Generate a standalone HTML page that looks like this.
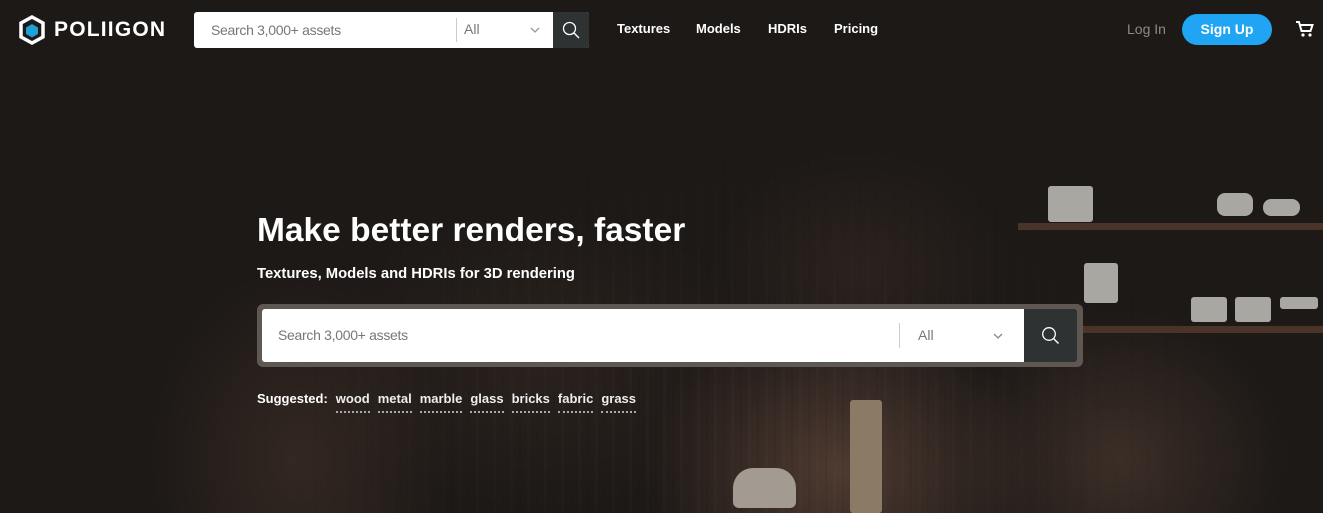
<!DOCTYPE html>
<html><head><meta charset="utf-8"><style>
*{margin:0;padding:0;box-sizing:border-box}
body{width:1323px;height:513px;overflow:hidden;background:#1d1917;font-family:"Liberation Sans",sans-serif;position:relative}
.wood{position:absolute;left:0;top:0;width:1323px;height:513px;
background:radial-gradient(ellipse 260px 220px at 840px 470px,rgba(95,70,58,.75),transparent 75%),
radial-gradient(ellipse 220px 200px at 1120px 460px,rgba(80,60,50,.6),transparent 75%),
radial-gradient(ellipse 200px 260px at 300px 460px,rgba(70,52,42,.55),transparent 75%),
radial-gradient(ellipse 300px 200px at 540px 360px,rgba(55,42,35,.5),transparent 75%),
radial-gradient(ellipse 200px 160px at 860px 270px,rgba(60,45,38,.45),transparent 75%);}
.stripes{position:absolute;left:0;top:0;width:1323px;height:513px;opacity:.15;
background:repeating-linear-gradient(90deg,rgba(120,90,75,.5) 0 3px,transparent 3px 9px,rgba(20,15,12,.6) 9px 11px,transparent 11px 17px);
-webkit-mask:radial-gradient(ellipse 500px 300px at 740px 430px,#000,transparent);}
.shelf{position:absolute;height:7px;background:#4a3329}
.pot{position:absolute;background:#a9a7a2;border-radius:3px}
.nav{position:absolute;top:0;left:0;right:0;height:58px}
.logo{position:absolute;left:18px;top:15px;display:flex;align-items:center;color:#fff;font-weight:bold;font-size:21px;letter-spacing:1.2px}
.sbox{position:absolute;left:194px;top:12px;width:395px;height:36px;background:#fff;border-radius:3px;overflow:hidden}
.sbox .ph{position:absolute;left:17px;top:10px;font-size:14px;color:#777;letter-spacing:-.3px}
.sbox .sep{position:absolute;left:262px;top:6px;width:1px;height:24px;background:#ccc}
.sbox .all{position:absolute;left:270px;top:9px;font-size:14px;color:#777}
.sbox .btn{position:absolute;right:0;top:0;width:36px;height:36px;background:#2e3232}
.links a{position:absolute;top:21px;color:#fff;font-size:13px;font-weight:bold;text-decoration:none}
h1{position:absolute;left:257px;top:212px;color:#fff;font-size:33.5px;font-weight:bold}
.sub{position:absolute;left:257px;top:266px;color:#fff;font-size:14.8px;font-weight:bold}
.big{position:absolute;left:257px;top:304px;width:826px;height:63px;background:#5e5752;border-radius:6px}
.big .in{position:absolute;left:5px;top:5px;width:762px;height:53px;background:#fff;border-radius:3px 0 0 3px}
.big .btn{position:absolute;left:767px;top:5px;width:53px;height:53px;background:#2e3232;border-radius:0 3px 3px 0}
.sug{position:absolute;left:257px;top:391px;color:#fff;font-size:13px;font-weight:bold;white-space:nowrap}
.sug span{display:inline-block;margin-right:8px}
.sug .t{color:#eee;border-bottom:2px dotted #aaa;padding-bottom:5px}
</style></head><body>
<div class="wood"></div><div class="stripes"></div>
<div class="shelf" style="left:1018px;top:223px;width:305px"></div>
<div class="shelf" style="left:1080px;top:326px;width:243px"></div>
<div class="pot" style="left:1048px;top:186px;width:45px;height:36px"></div>
<div class="pot" style="left:1217px;top:193px;width:36px;height:23px;border-radius:8px"></div>
<div class="pot" style="left:1263px;top:199px;width:37px;height:17px;border-radius:8px"></div>
<div class="pot" style="left:1084px;top:263px;width:34px;height:40px"></div>
<div class="pot" style="left:1191px;top:297px;width:36px;height:25px"></div>
<div class="pot" style="left:1235px;top:297px;width:36px;height:25px"></div>
<div class="pot" style="left:1280px;top:297px;width:38px;height:12px"></div>
<div class="pot" style="left:850px;top:400px;width:32px;height:113px;background:#8b7a66"></div>
<div class="pot" style="left:733px;top:468px;width:63px;height:40px;background:#a39a91;border-radius:20px 20px 6px 6px"></div>

<div class="nav">
<div class="logo"><svg width="28" height="30" viewBox="0 0 28 30"><path d="M14 2 L25 8 V22 L14 28 L3 22 V8 Z" fill="none" stroke="#fff" stroke-width="3.5"/><path d="M14 9 L20 12.5 V19 L14 22.5 L8 19 V12.5 Z" fill="#1fa0d8"/></svg><span style="margin-left:8px">POLIIGON</span></div>
<div class="sbox"><span class="ph">Search 3,000+ assets</span><div class="sep"></div><span class="all">All</span>
<svg style="position:absolute;left:335px;top:14px" width="12" height="8" viewBox="0 0 12 8"><path d="M2 2l4 4 4-4" stroke="#999" fill="none" stroke-width="1.3"/></svg>
<div class="btn"><svg style="margin:9px" width="18" height="18" viewBox="0 0 18 18"><circle cx="7.5" cy="7.5" r="6" stroke="#fff" stroke-width="1.3" fill="none"/><path d="M12 12l5 5" stroke="#fff" stroke-width="1.4"/></svg></div></div>
<div class="links"><a style="left:617px">Textures</a><a style="left:696px">Models</a><a style="left:768px">HDRIs</a><a style="left:834px">Pricing</a></div>
<span style="position:absolute;left:1127px;top:21px;color:#8a8a8a;font-size:14px">Log In</span>
<div style="position:absolute;left:1182px;top:14px;width:90px;height:31px;background:#1fa5f3;border-radius:16px;color:#fff;font-weight:bold;font-size:14px;text-align:center;line-height:31px">Sign Up</div>
<svg style="position:absolute;left:1295px;top:20px" width="19" height="18" viewBox="0 0 19 18"><path d="M1 2h3l2.5 9h9l2-6H5.5" stroke="#fff" stroke-width="2" fill="none"/><circle cx="8" cy="15" r="1.6" fill="#fff"/><circle cx="15" cy="15" r="1.6" fill="#fff"/></svg>
</div>

<h1>Make better renders, faster</h1>
<div class="sub">Textures, Models and HDRIs for 3D rendering</div>
<div class="big"><div class="in">
<span style="position:absolute;left:16px;top:18px;font-size:14px;color:#777;letter-spacing:-.3px">Search 3,000+ assets</span>
<div style="position:absolute;left:637px;top:14px;width:1px;height:25px;background:#ccc"></div>
<span style="position:absolute;left:656px;top:18px;font-size:14px;color:#777">All</span>
<svg style="position:absolute;left:730px;top:23px" width="12" height="8" viewBox="0 0 12 8"><path d="M2 2l4 4 4-4" stroke="#888" fill="none" stroke-width="1.3"/></svg>
</div><div class="btn"><svg style="margin:17px" width="19" height="19" viewBox="0 0 19 19"><circle cx="8" cy="8" r="6.3" stroke="#fff" stroke-width="1.3" fill="none"/><path d="M12.5 12.5l5 5" stroke="#fff" stroke-width="1.4"/></svg></div></div>
<div class="sug"><span>Suggested:</span><span class="t">wood</span><span class="t">metal</span><span class="t">marble</span><span class="t">glass</span><span class="t">bricks</span><span class="t">fabric</span><span class="t">grass</span></div>
</body></html>
